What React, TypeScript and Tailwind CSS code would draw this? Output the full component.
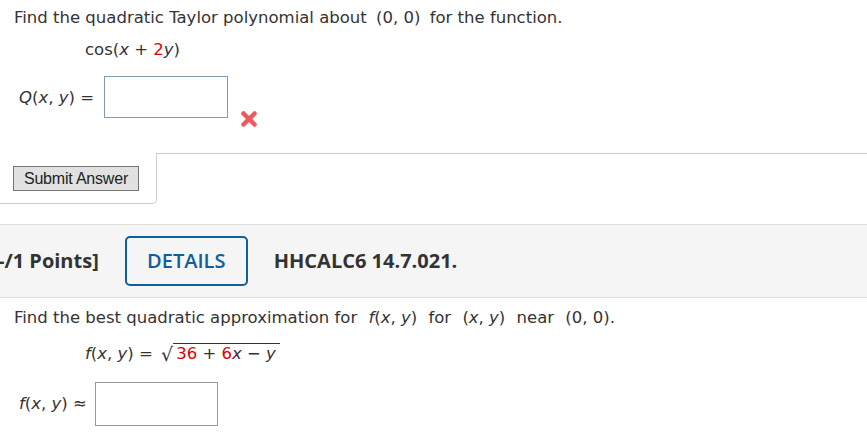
import React from "react";

const verdana = { fontFamily: '"DejaVu Sans", Verdana, sans-serif' };

function I({ children }: { children: React.ReactNode }) {
  return <i className="italic">{children}</i>;
}

function Red({ children }: { children: React.ReactNode }) {
  return <span className="text-[#e00000]">{children}</span>;
}

export default function App() {
  return (
    <div className="h-[448px] w-[867px] overflow-hidden bg-white text-[#333]" style={verdana}>
      <div className="px-[14px] pt-[8px] text-[16.5px] leading-[20px]">
        <p>
          Find the quadratic Taylor polynomial about <span className="mx-[4px]">(0, 0)</span> for the function.
        </p>
        <p className="mt-[12px] pl-[71px]">
          cos(<I>x</I> + <Red>2</Red>
          <I>y</I>)
        </p>
        <div className="mt-[16px] flex h-[42px] items-start pl-[5px]">
          <span className="mt-[12px]">
            <I>Q</I>(<I>x</I>, <I>y</I>) =
          </span>
          <div className="ml-[10px] h-[42px] w-[124px] shrink-0 border border-[#7f9db9]" />
          <span className="ml-[12px] mt-[34px]">
            <svg width="18" height="18" viewBox="0 0 18 18">
              <path d="M3.5 3.5 L14.5 14.5 M14.5 3.5 L3.5 14.5" stroke="#f0595b" strokeWidth="4.5" strokeLinecap="round" />
            </svg>
          </span>
        </div>
      </div>

      <div className="mt-[35px] flex h-[51px]">
        <div className="flex w-[157px] items-center rounded-br-[5px] border-r border-b border-[#ccc] pl-[13px]">
          <button
            className="h-[25px] w-[126px] border border-[#767676] bg-[#e1e1e1] text-[16px] tracking-[-0.2px] text-[#222]"
            style={{ fontFamily: '"Liberation Sans", Arial, sans-serif' }}
          >
            Submit Answer
          </button>
        </div>
        <div className="flex-1 border-t border-[#ccc]" />
      </div>

      <div
        className="mt-[20px] flex h-[74px] items-center border-y border-[#ddd] bg-[#f5f5f5]"
        style={{ fontFamily: '"Open Sans", sans-serif' }}
      >
        <span className="-ml-[2px] whitespace-nowrap text-[20px] font-bold text-[#333]">-/1 Points]</span>
        <div className="ml-[26px] flex h-[50px] w-[123px] shrink-0 items-center justify-center rounded-[5px] border-2 border-[#0e5f9c] text-[20px] font-semibold text-[#0e5f9c]">
          DETAILS
        </div>
        <span className="ml-[26px] text-[20px] font-bold text-[#333]">HHCALC6 14.7.021.</span>
      </div>

      <div className="px-[14px] pt-[10px] text-[16.5px] leading-[20px]">
        <p>
          Find the best quadratic approximation for <span className="mx-[6px]"><I>f</I>(<I>x</I>, <I>y</I>)</span> for{" "}
          <span className="mx-[6px]">(<I>x</I>, <I>y</I>)</span> near <span className="ml-[6px]">(0, 0)</span>.
        </p>
        <p className="mt-[15px] flex items-end pl-[71px]">
          <span>
            <I>f</I>(<I>x</I>, <I>y</I>) =&nbsp;
          </span>
          <span className="ml-[3px] text-[19px] leading-[20px]">√</span>
          <span className="border-t border-[#333] pl-[3px] pr-[4px]">
            <Red>36</Red> + <Red>6</Red>
            <I>x</I> − <I>y</I>
          </span>
        </p>
        <div className="mt-[18px] flex items-center pl-[5px]">
          <span>
            <I>f</I>(<I>x</I>, <I>y</I>) ≈
          </span>
          <div className="ml-[8px] h-[44px] w-[123px] border border-[#999]" />
        </div>
      </div>
    </div>
  );
}
